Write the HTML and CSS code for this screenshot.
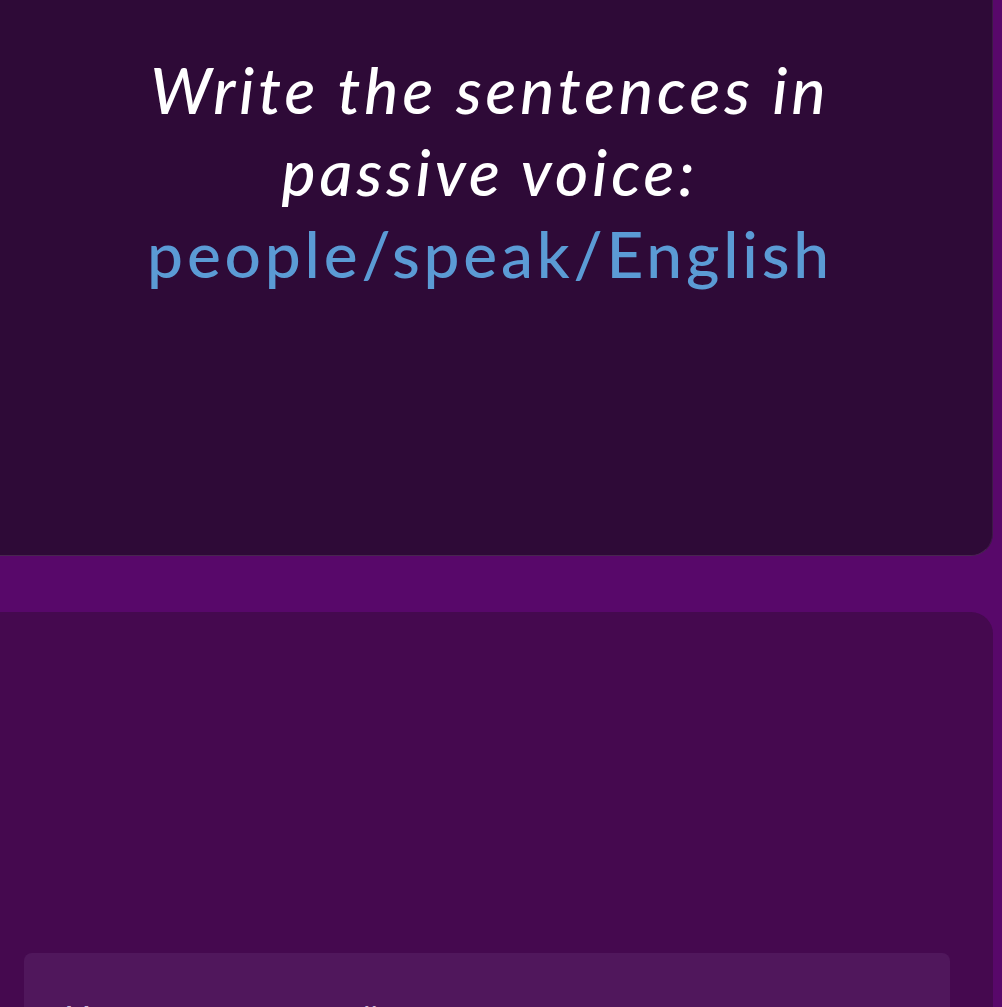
FILE: index.html
```html
<!DOCTYPE html>
<html lang="en">
<head>
<meta charset="utf-8">
<title>Passive voice</title>
<link rel="stylesheet" href="styles.css">
</head>
<body>
<main class="page">
  <section class="prompt-card">
    <h1 class="prompt-title">Write the sentences in passive voice:</h1>
    <p class="prompt-words">people/speak/English</p>
  </section>
  <section class="answer-card">
    <div class="answer-box">
      <span class="answer-text">Hovorme o vzore času</span>
    </div>
  </section>
</main>
</body>
</html>
```

FILE: styles.css
```css
html, body {
  margin: 0;
  padding: 0;
  height: 100%;
  overflow: hidden;
}
body {
  background: #58086a;
  font-family: "Lato", "Noto Sans", sans-serif;
}
.page {
  display: flex;
  flex-direction: column;
  gap: 56px;
  padding-right: 9px;
  height: 100%;
  box-sizing: border-box;
}
.prompt-card {
  height: 556px;
  box-sizing: border-box;
  background: #2e0a37;
  border-radius: 0 0 22px 0;
  border-bottom: 1px solid #47264f;
  border-right: 1px solid #3c1a45;
  padding: 49px 146px 0 134px;
  text-align: center;
  flex: none;
}
.prompt-title {
  margin: 0;
  font-size: 64px;
  line-height: 82px;
  font-style: italic;
  font-weight: 500;
  letter-spacing: 4px;
  color: #ffffff;
}
.prompt-words {
  margin: 0;
  font-size: 64px;
  line-height: 82px;
  font-weight: 500;
  letter-spacing: 3.8px;
  color: #5b9bd5;
}
.answer-card {
  flex: 1;
  background: #45094f;
  border-radius: 0 22px 0 0;
  padding: 341px 43px 0 24px;
}
.answer-box {
  background: #50175c;
  border-radius: 8px;
  height: 200px;
  padding: 43px 40px;
  box-sizing: border-box;
}
.answer-text {
  font-size: 36px;
  line-height: 44px;
  letter-spacing: 1px;
  color: #cdb6da;
}
```
